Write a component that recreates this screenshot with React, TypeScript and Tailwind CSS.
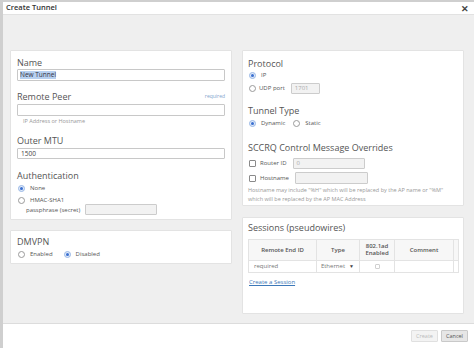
import React from "react";

const F = { fontFamily: '"Open Sans", "Liberation Sans", sans-serif' };

function Radio({ on }: { on?: boolean }) {
  return on ? (
    <span className="inline-flex h-[7px] w-[7px] shrink-0 items-center justify-center rounded-full border border-[#9ab8e6] bg-[#dfe9f8]">
      <span className="h-[3px] w-[3px] rounded-full bg-[#3a6fd0]" />
    </span>
  ) : (
    <span className="inline-block h-[7px] w-[7px] shrink-0 rounded-full border border-[#9a9a9a] bg-white" />
  );
}

function Check() {
  return <span className="inline-block h-[7px] w-[7px] shrink-0 rounded-[1px] border border-[#8a8a8a] bg-white" />;
}

function Label({ children, className = "" }: { children: React.ReactNode; className?: string }) {
  return <div className={"h-[11px] text-[9px] leading-[11px] text-[#555] " + className}>{children}</div>;
}

export default function App() {
  return (
    <div style={F} className="flex h-[348px] w-[474px] flex-col overflow-hidden bg-[#cfcfcf] pl-[3px] pt-[2px]">
      <div className="flex h-[13px] shrink-0 items-center justify-between border-b border-[#e2e2e2] bg-white pl-[3px] pr-[5px]">
        <span className="text-[7.5px] font-semibold leading-none text-[#333]">Create Tunnel</span>
        <span className="text-[9px] font-bold leading-none text-[#444]">✕</span>
      </div>
      <div className="flex h-[308px] shrink-0 gap-[10px] bg-[#efefef] pl-[7px] pr-[10px] pt-[35px]">
        {/* left column */}
        <div className="flex w-[222px] flex-col gap-[10px]">
          <div className="h-[170px] rounded-[1px] border border-[#e3e3e3] bg-white px-[6px] pt-[6px]">
            <Label>Name</Label>
            <div className="mt-[1px] flex h-[12px] items-center rounded-[1px] border border-[#c8c8c8] px-[2px]">
              <span className="bg-[#b7d0f0] text-[6.5px] leading-[8px] text-[#334]">New Tunnel</span>
            </div>
            <div className="mt-[10px] flex items-center justify-between">
              <Label>Remote Peer</Label>
              <span className="text-[5px] leading-none text-[#7fa3cc]">required</span>
            </div>
            <div className="mt-[2px] h-[12px] rounded-[1px] border border-[#c8c8c8]" />
            <div className="mt-[1px] h-[8px] pl-[6px] text-[5.5px] leading-[8px] text-[#999]">IP Address or Hostname</div>
            <Label className="mt-[10px]">Outer MTU</Label>
            <div className="mt-[2px] flex h-[11px] items-center rounded-[1px] border border-[#c8c8c8] px-[3px] text-[6.5px] text-[#444]">1500</div>
            <Label className="mt-[11px]">Authentication</Label>
            <div className="mt-[3px] flex h-[8px] items-center gap-[5px] pl-[1px]">
              <Radio on />
              <span className="text-[6px] text-[#555]">None</span>
            </div>
            <div className="mt-[4px] flex h-[8px] items-center gap-[5px] pl-[1px]">
              <Radio />
              <span className="text-[6px] text-[#555]">HMAC-SHA1</span>
            </div>
            <div className="flex items-center gap-[5px] pl-[9px]">
              <span className="text-[6px] leading-[8px] text-[#555]">passphrase (secret)</span>
              <div className="h-[11px] w-[72px] rounded-[1px] border border-[#ccc] bg-[#f2f2f2]" />
            </div>
          </div>
          <div className="h-[34px] rounded-[1px] border border-[#e3e3e3] bg-white px-[6px] pt-[5px]">
            <Label>DMVPN</Label>
            <div className="mt-[3px] flex h-[8px] items-center gap-[5px] pl-[1px]">
              <Radio />
              <span className="mr-[6px] text-[6px] text-[#555]">Enabled</span>
              <Radio on />
              <span className="text-[6px] text-[#555]">Disabled</span>
            </div>
          </div>
        </div>
        {/* right column */}
        <div className="flex w-[222px] flex-col gap-[11px]">
          <div className="h-[156px] rounded-[1px] border border-[#e3e3e3] bg-white px-[5px] pt-[7px]">
            <Label>Protocol</Label>
            <div className="mt-[1px] flex h-[10px] items-center gap-[5px] pl-[1px]">
              <Radio on />
              <span className="text-[6px] text-[#555]">IP</span>
            </div>
            <div className="mt-[3px] flex h-[11px] items-center gap-[3px] pl-[1px]">
              <Radio />
              <span className="mr-[3px] text-[6px] text-[#555]">UDP port</span>
              <div className="flex h-[11px] w-[29px] items-center rounded-[1px] border border-[#ccc] bg-[#f2f2f2] px-[3px] text-[6px] text-[#aaa]">1701</div>
            </div>
            <Label className="mt-[11px]">Tunnel Type</Label>
            <div className="mt-[3px] flex h-[8px] items-center gap-[5px] pl-[1px]">
              <Radio on />
              <span className="mr-[3px] text-[6px] text-[#555]">Dynamic</span>
              <Radio />
              <span className="text-[6px] text-[#555]">Static</span>
            </div>
            <Label className="mt-[15px]">SCCRQ Control Message Overrides</Label>
            <div className="mt-[5px] flex h-[11px] items-center gap-[4px] pl-[1px]">
              <Check />
              <span className="mr-[2px] text-[6px] text-[#555]">Router ID</span>
              <div className="flex h-[11px] w-[72px] items-center rounded-[1px] border border-[#ccc] bg-[#f2f2f2] px-[3px] text-[6px] text-[#aaa]">0</div>
            </div>
            <div className="mt-[3px] flex h-[12px] items-center gap-[4px] pl-[1px]">
              <Check />
              <span className="mr-[2px] text-[6px] text-[#555]">Hostname</span>
              <div className="h-[12px] w-[73px] rounded-[1px] border border-[#ccc] bg-[#f2f2f2]" />
            </div>
            <div className="mt-[2px] text-[5.5px] leading-[9px] text-[#999]">
              Hostname may include "%H" which will be replaced by the AP name or "%M"
              <br />
              which will be replaced by the AP MAC Address
            </div>
          </div>
          <div className="h-[97px] rounded-[1px] border border-[#e3e3e3] bg-white px-[5px] pt-[4px]">
            <Label>Sessions (pseudowires)</Label>
            <div className="mt-[6px] w-[211px] border border-[#e3e3e3] text-[6px] text-[#555]">
              <div className="flex h-[21px] border-b border-[#e3e3e3] bg-[#f7f7f7] font-semibold">
                <div className="flex w-[68px] items-center justify-center border-r border-[#e3e3e3]">Remote End ID</div>
                <div className="flex w-[43px] items-center justify-center border-r border-[#e3e3e3]">Type</div>
                <div className="flex w-[35px] items-center justify-center border-r border-[#e3e3e3] text-center leading-[7px]">802.1ad<br />Enabled</div>
                <div className="flex w-[59px] items-center justify-center border-r border-[#e3e3e3]">Comment</div>
                <div className="flex-1" />
              </div>
              <div className="flex h-[11px]">
                <div className="flex w-[68px] items-center border-r border-[#e3e3e3] pl-[5px] text-[#777]">required</div>
                <div className="flex w-[43px] items-center justify-end gap-[4px] border-r border-[#e3e3e3] pr-[5px] text-[#777]">
                  Ethernet <span className="text-[5px] text-[#444]">▼</span>
                </div>
                <div className="flex w-[35px] items-center justify-center border-r border-[#e3e3e3]">
                  <span className="inline-block h-[5px] w-[5px] rounded-[1px] border border-[#d0d0d0]" />
                </div>
                <div className="w-[59px] border-r border-[#e3e3e3]" />
                <div className="flex-1" />
              </div>
            </div>
            <div className="mt-[5px] pl-[1px] text-[6px] leading-[8px] text-[#3c78b8] underline">Create a Session</div>
          </div>
        </div>
      </div>
      <div className="flex flex-1 items-start justify-end gap-[3px] border-t border-[#dcdcdc] bg-white pr-[6px] pt-[6px]">
        <div className="flex h-[12px] w-[27px] items-center justify-center rounded-[1px] border border-[#e0e0e0] bg-[#f3f3f3] text-[5.5px] text-[#bbb]">Create</div>
        <div className="flex h-[12px] w-[27px] items-center justify-center rounded-[1px] border border-[#c9c9c9] bg-[#e6e6e6] text-[5.5px] text-[#555]">Cancel</div>
      </div>
    </div>
  );
}
